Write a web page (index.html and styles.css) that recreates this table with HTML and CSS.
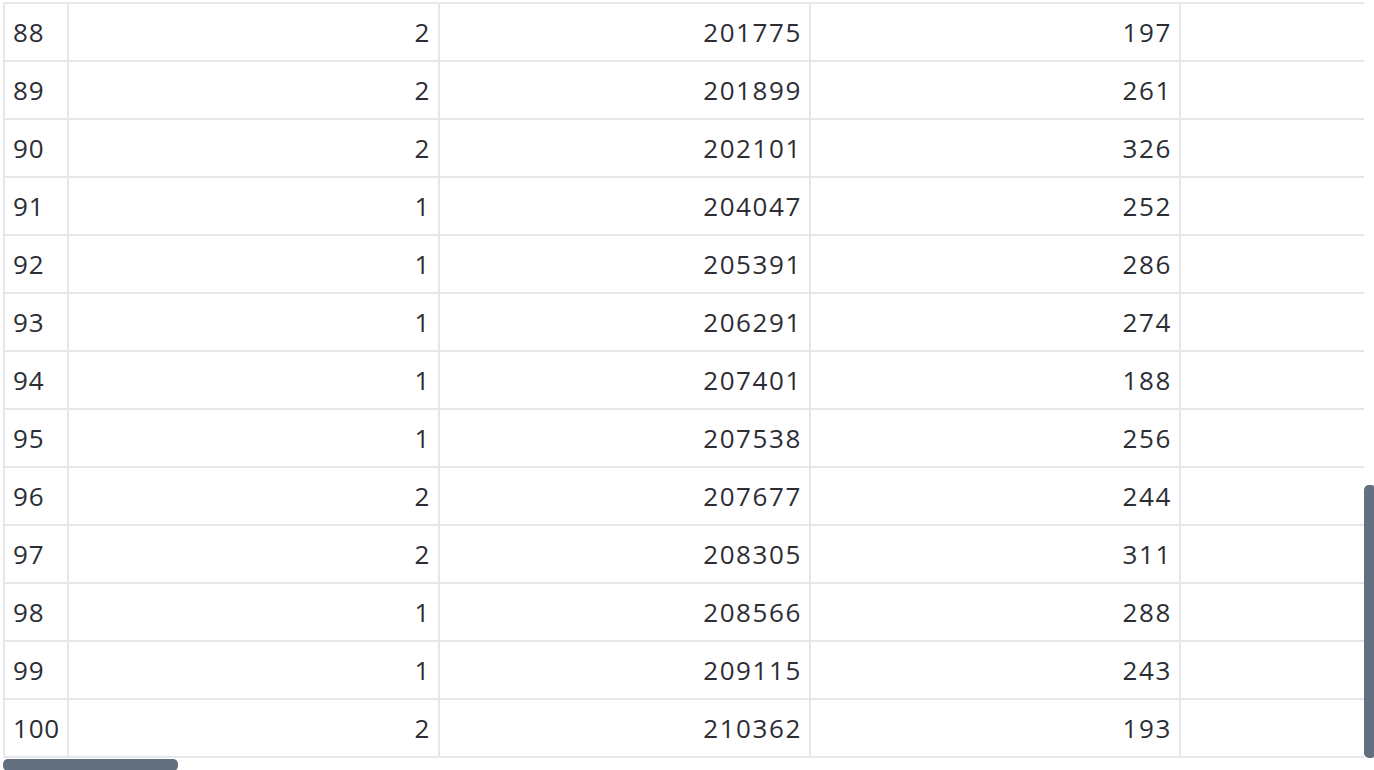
FILE: index.html
```html
<!DOCTYPE html>
<html lang="en">
<head>
<meta charset="utf-8">
<title>Data table</title>
<link rel="stylesheet" href="styles.css">
</head>
<body>
<div class="viewport">
  <div class="scroller">
    <table class="grid">
      <colgroup>
        <col class="c-idx"><col class="c-a"><col class="c-b"><col class="c-c"><col class="c-d">
      </colgroup>
      <tbody>
        <tr><td class="idx">88</td><td>2</td><td>201775</td><td>197</td><td></td></tr>
        <tr><td class="idx">89</td><td>2</td><td>201899</td><td>261</td><td></td></tr>
        <tr><td class="idx">90</td><td>2</td><td>202101</td><td>326</td><td></td></tr>
        <tr><td class="idx">91</td><td>1</td><td>204047</td><td>252</td><td></td></tr>
        <tr><td class="idx">92</td><td>1</td><td>205391</td><td>286</td><td></td></tr>
        <tr><td class="idx">93</td><td>1</td><td>206291</td><td>274</td><td></td></tr>
        <tr><td class="idx">94</td><td>1</td><td>207401</td><td>188</td><td></td></tr>
        <tr><td class="idx">95</td><td>1</td><td>207538</td><td>256</td><td></td></tr>
        <tr><td class="idx">96</td><td>2</td><td>207677</td><td>244</td><td></td></tr>
        <tr><td class="idx">97</td><td>2</td><td>208305</td><td>311</td><td></td></tr>
        <tr><td class="idx">98</td><td>1</td><td>208566</td><td>288</td><td></td></tr>
        <tr><td class="idx">99</td><td>1</td><td>209115</td><td>243</td><td></td></tr>
        <tr><td class="idx">100</td><td>2</td><td>210362</td><td>193</td><td></td></tr>
      </tbody>
    </table>
  </div>
  <div class="thumb-v"></div>
  <div class="thumb-h"></div>
</div>
</body>
</html>
```
FILE: styles.css
```css
html, body {
  margin: 0;
  padding: 0;
  background: #ffffff;
}

.viewport {
  position: relative;
  width: 1374px;
  height: 770px;
  overflow: hidden;
  background: #ffffff;
}

.scroller {
  width: 1364px;
  height: 759px;
  overflow: hidden;
  padding: 2px 0 0 3px;
  box-sizing: border-box;
}

.grid {
  border-collapse: separate;
  border-spacing: 0;
  table-layout: fixed;
  width: 1578px;
  border-left: 2px solid #e5e7eb;
  border-top: 2px solid #e5e7eb;
  font-family: "Open Sans", "Noto Sans", sans-serif;
  font-size: 26px;
  letter-spacing: 1.6px;
  color: #2b2e35;
}

.c-idx { width: 64px; }
.c-a { width: 371px; }
.c-b { width: 371px; }
.c-c { width: 370px; }
.c-d { width: 400px; }

.grid td {
  box-sizing: border-box;
  height: 58px;
  padding: 0 7px 0 8px;
  border-right: 2px solid #e5e7eb;
  border-bottom: 2px solid #e5e7eb;
  text-align: right;
  vertical-align: middle;
  white-space: nowrap;
  line-height: 1;
}

.grid td.idx {
  text-align: left;
  padding: 0 0 0 8px;
  letter-spacing: 0.8px;
}

.thumb-v {
  position: absolute;
  left: 1364px;
  top: 485px;
  width: 10px;
  height: 273px;
  background: #647080;
  border-radius: 5px 2px 2px 5px;
}

.thumb-h {
  position: absolute;
  left: 3px;
  top: 759px;
  width: 175px;
  height: 12px;
  background: #647080;
  border-radius: 5px;
}
```
